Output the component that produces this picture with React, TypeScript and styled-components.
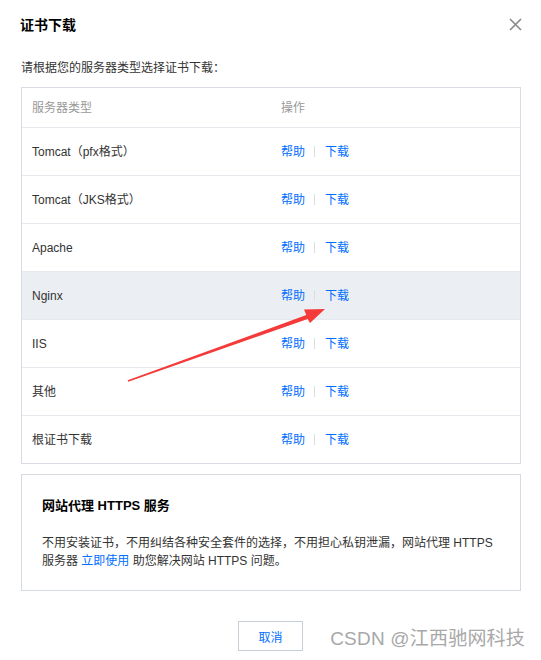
import React from "react";
import styled, { createGlobalStyle } from "styled-components";

const GlobalStyle = createGlobalStyle`
  html, body {
    margin: 0;
    padding: 0;
    background: #fff;
  }
  body {
    font-family: "Liberation Sans", "Noto Sans CJK SC", sans-serif;
    font-size: 12px;
    color: #000;
  }
`;

const Dialog = styled.div`
  position: relative;
  width: 541px;
  height: 660px;
  box-sizing: border-box;
  padding: 0 20px 0 21px;
  display: flex;
  flex-direction: column;
`;

const Header = styled.div`
  display: flex;
  align-items: center;
  justify-content: space-between;
  height: 24px;
  margin-top: 12px;
  margin-left: -1px;
`;

const Title = styled.h3`
  margin: 0;
  font-size: 14px;
  font-weight: bold;
  color: #000;
`;

const CloseButton = styled.button`
  border: 0;
  background: none;
  padding: 0;
  width: 14px;
  height: 14px;
  margin-right: -1px;
  display: flex;
  align-items: center;
  justify-content: center;
  cursor: pointer;
`;

const Hint = styled.p`
  margin: 23px 0 0;
  line-height: 18px;
  color: #333;
`;

const Table = styled.div`
  margin-top: 10px;
  width: 500px;
  border: 1px solid #d9dde3;
  box-sizing: border-box;
`;

const Row = styled.div<{ $head?: boolean; $active?: boolean }>`
  display: grid;
  grid-template-columns: 249px 1fr;
  align-items: center;
  height: ${(p) => (p.$head ? "39px" : "47px")};
  padding-left: 10px;
  border-top: ${(p) => (p.$head ? "none" : "1px solid #e5e8ec")};
  background: ${(p) => (p.$active ? "#ebeef2" : "#fff")};
  color: ${(p) => (p.$head ? "#999" : "#333")};
  line-height: 16px;
`;

const Ops = styled.div`
  display: flex;
  align-items: center;
`;

const Link = styled.a`
  color: #006eff;
  text-decoration: none;
  cursor: pointer;
`;

const Divider = styled.span`
  display: inline-block;
  width: 1px;
  height: 11px;
  background: #ddd;
  margin: 0 10px 0 9px;
`;

const Promo = styled.div`
  margin-top: 10px;
  width: 500px;
  height: 117px;
  box-sizing: border-box;
  border: 1px solid #d5d9e0;
  padding: 22px 20px 0;
`;

const PromoTitle = styled.h4`
  margin: 0;
  font-size: 13px;
  font-weight: bold;
  color: #000;
  line-height: 18px;
`;

const PromoText = styled.p`
  margin: 19px 0 0;
  line-height: 18px;
  color: #333;
`;

const Footer = styled.div`
  display: flex;
  justify-content: center;
  margin-top: 30px;
  margin-left: -21px;
  margin-right: -20px;
`;

const CancelButton = styled.button`
  width: 65px;
  height: 30px;
  border: 1px solid #c8ced8;
  background: #fff;
  color: #006eff;
  font-family: inherit;
  font-size: 12px;
  cursor: pointer;
`;

const Watermark = styled.div`
  position: absolute;
  right: 16px;
  bottom: 10px;
  font-size: 19px;
  color: #a8a8a8;
  letter-spacing: 0.2px;
  pointer-events: none;
`;

const Arrow = styled.svg`
  position: absolute;
  left: 0;
  top: 0;
  pointer-events: none;
`;

const rows = [
  "Tomcat（pfx格式）",
  "Tomcat（JKS格式）",
  "Apache",
  "Nginx",
  "IIS",
  "其他",
  "根证书下载",
];

export default function App() {
  return (
    <>
      <GlobalStyle />
      <Dialog>
        <Header>
          <Title>证书下载</Title>
          <CloseButton aria-label="关闭">
            <svg width="13" height="13" viewBox="0 0 13 13">
              <path d="M1 1L12 12M12 1L1 12" stroke="#888" strokeWidth="1.6" />
            </svg>
          </CloseButton>
        </Header>
        <Hint>请根据您的服务器类型选择证书下载：</Hint>
        <Table>
          <Row $head>
            <span>服务器类型</span>
            <span>操作</span>
          </Row>
          {rows.map((name) => (
            <Row key={name} $active={name === "Nginx"}>
              <span>{name}</span>
              <Ops>
                <Link>帮助</Link>
                <Divider />
                <Link>下载</Link>
              </Ops>
            </Row>
          ))}
        </Table>
        <Promo>
          <PromoTitle>网站代理 HTTPS 服务</PromoTitle>
          <PromoText>
            不用安装证书，不用纠结各种安全套件的选择，不用担心私钥泄漏，网站代理 HTTPS
            <br />
            服务器 <Link>立即使用</Link> 助您解决网站 HTTPS 问题。
          </PromoText>
        </Promo>
        <Footer>
          <CancelButton>取消</CancelButton>
        </Footer>
        <Watermark>CSDN @江西驰网科技</Watermark>
        <Arrow width="541" height="660" viewBox="0 0 541 660">
          <polygon
            points="127.7,380.3 306.3,315.1 304,309.5 325,309 310,323 307.7,318.9 128.3,381.7"
            fill="#f53a3a"
          />
        </Arrow>
      </Dialog>
    </>
  );
}
